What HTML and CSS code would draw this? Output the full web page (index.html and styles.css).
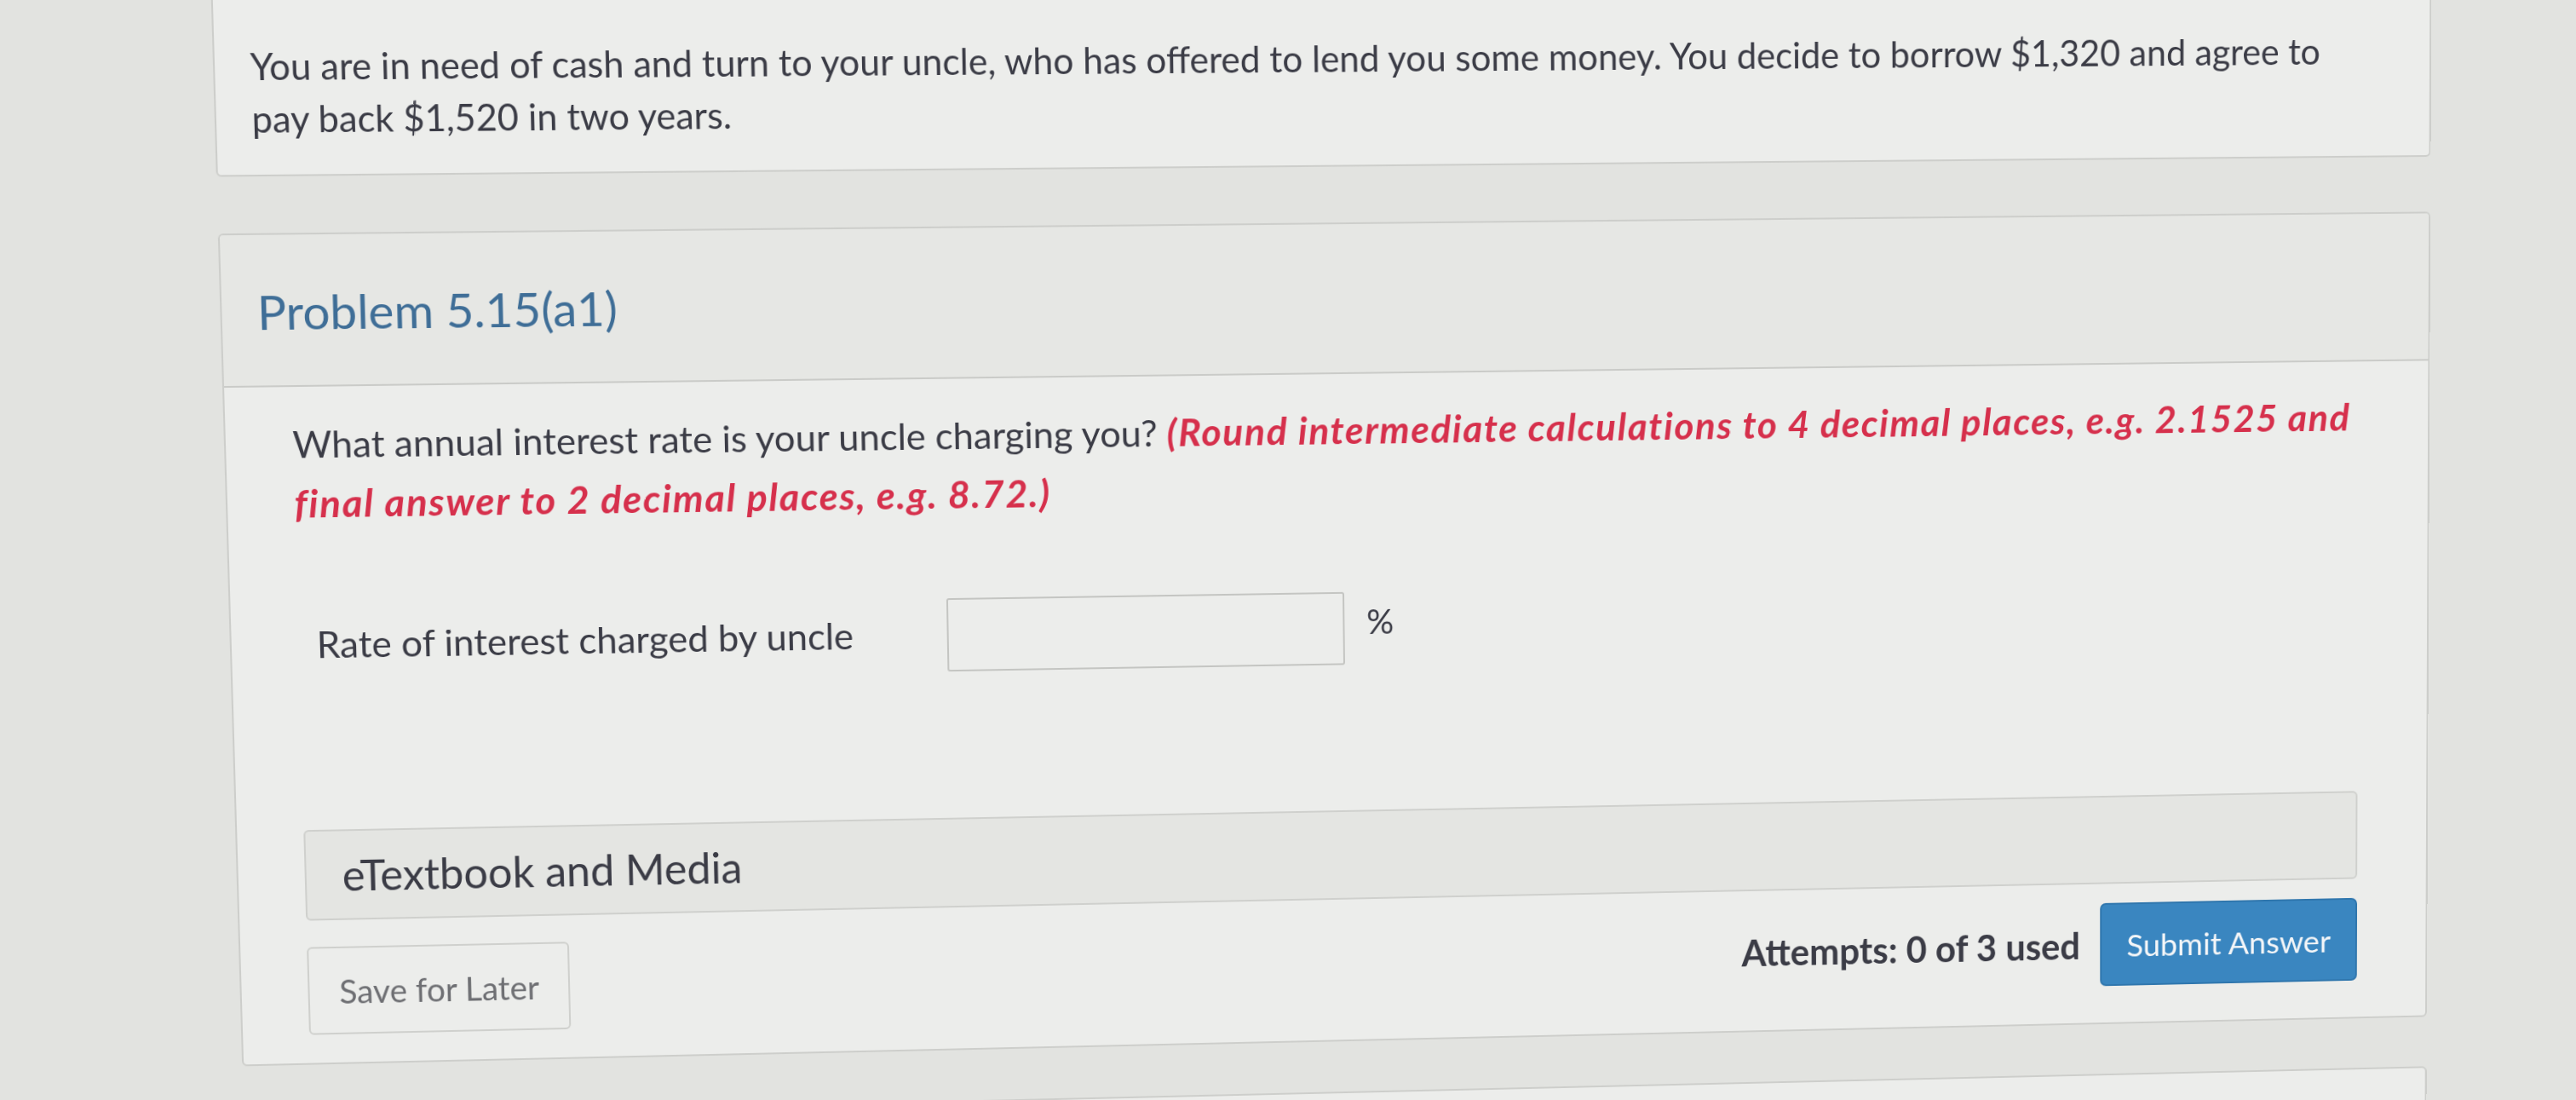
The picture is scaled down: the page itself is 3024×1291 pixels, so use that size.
FILE: index.html
```html
<!DOCTYPE html>
<html lang="en">
<head>
<meta charset="utf-8">
<title>Problem 5.15(a1)</title>
<link rel="stylesheet" href="styles.css">
</head>
<body>
<div class="page">
  <section class="card intro">
    <p class="intro-text">You are in need of cash and turn to your uncle, who has offered to lend you some money. You decide to borrow $1,320 and agree to pay back $1,520 in two years.</p>
  </section>

  <section class="card problem">
    <header class="problem-head">
      <h2 class="problem-title">Problem 5.15(a1)</h2>
    </header>
    <div class="problem-body">
      <p class="question">What annual interest rate is your uncle charging you? <strong class="hint">(Round intermediate calculations to 4 decimal places, e.g. 2.1525 and</strong> <strong class="hint">final answer to 2 decimal places, e.g. 8.72.)</strong></p>

      <div class="answer-row">
        <label class="answer-label" for="rate">Rate of interest charged by uncle</label>
        <input class="answer-input" id="rate" type="text">
        <span class="unit">%</span>
      </div>

      <div class="media">eTextbook and Media</div>

      <div class="footer">
        <button class="btn-save" type="button">Save for Later</button>
        <div class="submit-group">
          <span class="attempts">Attempts: 0 of 3 used</span>
          <button class="btn-submit" type="button">Submit Answer</button>
        </div>
      </div>
    </div>
  </section>

  <section class="card next"></section>
</div>
</body>
</html>
```

FILE: styles.css
```css
html, body {
  margin: 0;
  padding: 0;
}

body {
  width: 3024px;
  height: 1291px;
  overflow: hidden;
  background: #e2e3e0;
  font-family: Lato, "Noto Sans", sans-serif;
  color: #3b3c46;
}

.page {
  box-sizing: border-box;
  width: 3024px;
  height: 1291px;
  padding: 0 147px 0 285px;
  transform-origin: 1512px 645px;
  transform: perspective(3000px) rotateX(-2.2deg) rotateY(2.3deg) rotateZ(-0.74deg);
}

.card {
  background: #ecedeb;
  border: 2px solid #cdcecb;
  border-radius: 6px;
}

/* intro card */
.intro {
  margin-top: -40px;
  padding: 80px 44px 34px 40px;
}

.intro-text {
  margin: 0;
  max-width: 2490px;
  font-size: 42px;
  line-height: 60px;
}

/* problem card */
.problem {
  margin-top: 65px;
  overflow: hidden;
}

.problem-head {
  background: #e6e7e4;
  border-bottom: 2px solid #cacbc8;
  padding: 56px 40px 52px 40px;
}

.problem-title {
  margin: 0;
  font-size: 55px;
  line-height: 65px;
  font-weight: 400;
  color: #3f6e97;
}

.problem-body {
  padding: 31px 70px 33px 76px;
}

.question {
  margin: 0;
  font-size: 43px;
  line-height: 68px;
}

.hint {
  font-weight: 700;
  font-style: italic;
  font-size: 44.5px;
  letter-spacing: 1.6px;
  color: #d6304c;
}

.answer-row {
  display: flex;
  align-items: flex-start;
  margin-top: 87px;
  padding-left: 21px;
}

.answer-label {
  width: 727px;
  margin-top: 12px;
  font-size: 43px;
  line-height: 60px;
}

.answer-input {
  box-sizing: border-box;
  width: 466px;
  height: 86px;
  margin: 0;
  background: #ecedeb;
  border: 2px solid #c4c5c2;
  border-radius: 3px;
  font-family: inherit;
  font-size: 40px;
}

.unit {
  margin: 5px 0 0 26px;
  font-size: 40px;
  line-height: 60px;
}

.media {
  margin-top: 172px;
  margin-right: 14px;
  height: 102px;
  box-sizing: content-box;
  padding: 0 41px;
  background: #e4e5e2;
  border: 2px solid #cfd0cd;
  border-radius: 6px;
  display: flex;
  align-items: center;
  font-size: 49.5px;
}

.footer {
  display: flex;
  justify-content: space-between;
  align-items: flex-start;
  margin-top: 23px;
  margin-right: 14px;
}

.btn-save {
  box-sizing: border-box;
  width: 302px;
  height: 103px;
  margin-top: 8px;
  padding: 0 0 0 34px;
  text-align: left;
  background: #ecedeb;
  border: 2px solid #cfd0cd;
  border-radius: 6px;
  font-family: inherit;
  font-size: 38px;
  color: #6e6f73;
}

.submit-group {
  display: flex;
  align-items: center;
  gap: 24px;
}

.attempts {
  font-size: 43px;
  font-weight: 700;
  color: #3b3c46;
}

.btn-submit {
  box-sizing: border-box;
  width: 313px;
  height: 100px;
  padding: 0;
  background: #3a86c0;
  border: 2px solid #2f76ad;
  border-radius: 7px;
  font-family: inherit;
  font-size: 37.5px;
  color: #f4f6f8;
}

.next {
  margin-top: 60px;
  height: 200px;
}
```
